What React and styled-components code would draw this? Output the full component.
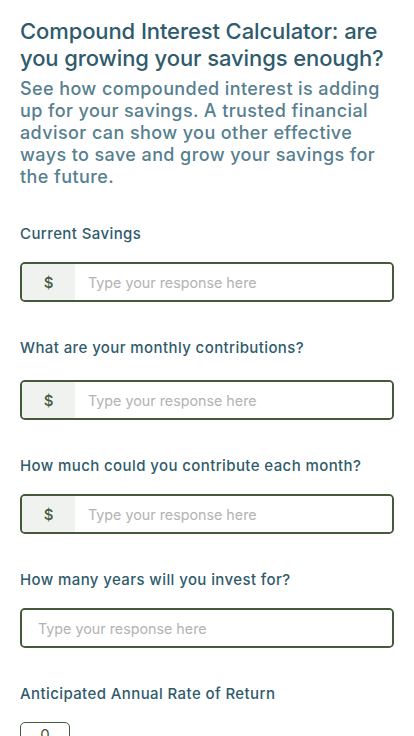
import React from "react";
import styled, { createGlobalStyle } from "styled-components";

const Global = createGlobalStyle`
  html, body { margin: 0; padding: 0; background: #fff; }
  body { font-family: Inter, "Liberation Sans", Arial, sans-serif; }
  * { box-sizing: border-box; }
`;

const Page = styled.div`
  padding: 18px 20px 0 20px;
  display: flex;
  flex-direction: column;
`;

const Title = styled.h1`
  margin: 0;
  font-size: 22px;
  line-height: 27px;
  font-weight: 500;
  color: #2f5b6c;
  letter-spacing: -0.1px;
`;

const Intro = styled.p`
  margin: 6px 0 0 0;
  font-size: 18px;
  line-height: 22px;
  font-weight: 500;
  color: #567f8f;
  letter-spacing: 0.4px;
`;

const Form = styled.div`
  margin-top: 36px;
  display: flex;
  flex-direction: column;
  gap: 36px;
`;

const Field = styled.div`
  display: flex;
  flex-direction: column;
  gap: ${(p) => p.$gap || 18}px;
`;

const Label = styled.label`
  font-size: 15px;
  line-height: 20px;
  font-weight: 500;
  color: #2f5b6c;
  letter-spacing: 0.4px;
`;

const InputBox = styled.div`
  display: flex;
  height: 40px;
  border: 2px solid #44593a;
  border-radius: 5px;
  overflow: hidden;
`;

const Prefix = styled.div`
  width: 53px;
  flex: none;
  background: #eff2ef;
  color: #44593a;
  display: flex;
  align-items: center;
  justify-content: center;
  font-size: 15px;
  font-weight: 500;
`;

const Input = styled.input`
  flex: 1;
  min-width: 0;
  border: none;
  outline: none;
  padding: 0 0 0 ${(p) => (p.$plain ? "16px" : "13px")};
  font-family: Inter, "Liberation Sans", Arial, sans-serif;
  font-size: 14.3px;
  letter-spacing: 0;
  color: #333;
  background: #fff;
  &::placeholder { color: #b3b3b3; }
`;

const SmallBox = styled.div`
  width: 50px;
  height: 30px;
  border: 1px solid #44593a;
  border-radius: 5px;
  display: flex;
  justify-content: center;
  padding-top: 2px;
  color: #44593a;
  font-size: 15px;
`;

const MoneyField = ({ label, gap }) => (
  <Field $gap={gap}>
    <Label>{label}</Label>
    <InputBox>
      <Prefix>$</Prefix>
      <Input placeholder="Type your response here" />
    </InputBox>
  </Field>
);

export default function App() {
  return (
    <>
      <Global />
      <Page>
        <Title>Compound Interest Calculator: are you growing your savings enough?</Title>
        <Intro>
          See how compounded interest is adding up for your savings. A trusted financial
          advisor can show you other effective ways to save and grow your savings for the
          future.
        </Intro>
        <Form>
          <MoneyField label="Current Savings" />
          <MoneyField label="What are your monthly contributions?" gap={22} />
          <MoneyField label="How much could you contribute each month?" />
          <Field>
            <Label>How many years will you invest for?</Label>
            <InputBox>
              <Input $plain placeholder="Type your response here" />
            </InputBox>
          </Field>
          <Field>
            <Label>Anticipated Annual Rate of Return</Label>
            <SmallBox>0</SmallBox>
          </Field>
        </Form>
      </Page>
    </>
  );
}
